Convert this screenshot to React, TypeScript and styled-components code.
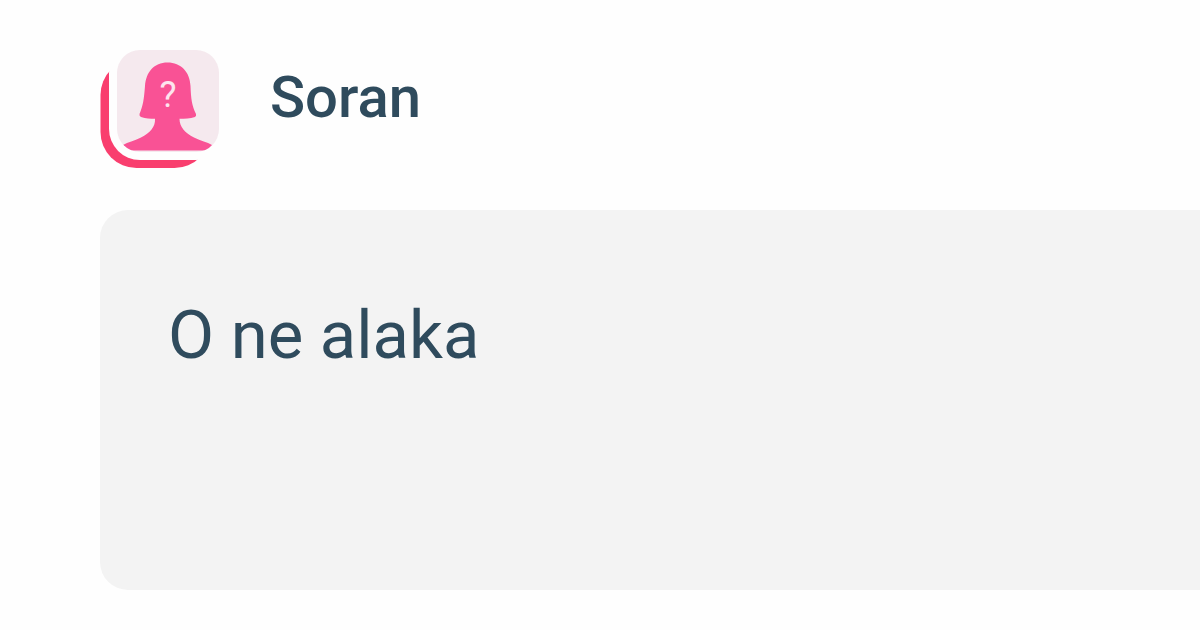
import React from "react";
import styled, { createGlobalStyle } from "styled-components";

const GlobalStyle = createGlobalStyle`
  body {
    margin: 0;
    background: #fefefe;
    color: #2f4b5d;
    font-family: Roboto, "Liberation Sans", sans-serif;
  }
`;

const Post = styled.article`
  display: flex;
  flex-direction: column;
  gap: 42px;
  padding: 48px 0 40px 100px;
`;

const Header = styled.header`
  display: flex;
  align-items: flex-start;
  gap: 50px;
`;

const Avatar = styled.svg`
  display: block;
  flex: none;
  width: 120px;
  height: 120px;
`;

const Name = styled.h1`
  margin: 0;
  padding-top: 14px;
  font-size: 58px;
  font-weight: 500;
  line-height: 70px;
`;

const Bubble = styled.section`
  min-height: 380px;
  box-sizing: border-box;
  padding: 85px 68px;
  border-radius: 28px 0 0 28px;
  background: #f3f3f3;
`;

const Message = styled.p`
  margin: 0;
  font-size: 67px;
  line-height: 80px;
`;

export default function App() {
  return (
    <>
      <GlobalStyle />
      <Post>
        <Header>
          <Avatar viewBox="0 0 120 120" role="img" aria-label="Profile picture">
            <defs>
              <clipPath id="frame">
                <rect x="17" y="2" width="102" height="102" rx="23" />
              </clipPath>
            </defs>
            <rect x="0.5" y="11" width="110" height="109" rx="36" fill="#f93e6e" />
            <rect x="9" y="-6" width="118" height="118" rx="31" fill="#fefefe" />
            <rect x="17" y="2" width="102" height="102" rx="23" fill="#f5e9ee" />
            <path
              clipPath="url(#frame)"
              fill="#f95295"
              d="M67.500 14.500C54 14.500 46 24 45 38C44 51 43 58 39.500 66Q39 68 41 69C46 70.500 50 70.700 55 70.800C55.500 79 50 85 41 89.500C34 93 28 94 23 97L29 102.500H107L112 97C107 94 101 93 94 89.500C85 85 79.500 79 79.500 70.800C85 70.700 90 70.500 95 69Q96.500 68 96 66C92 58 91 51 90.500 38C90 24 81 14.500 67.500 14.500Z"
            />
            <text x="68" y="59" textAnchor="middle" fontSize="36" fill="#fde4ee">
              ?
            </text>
          </Avatar>
          <Name>Soran</Name>
        </Header>
        <Bubble>
          <Message>O ne alaka</Message>
        </Bubble>
      </Post>
    </>
  );
}
